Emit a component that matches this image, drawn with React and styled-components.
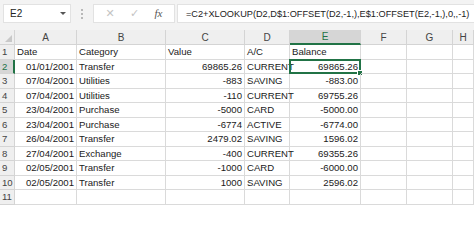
import React from 'react';
import styled, { createGlobalStyle, css } from 'styled-components';

const Global = createGlobalStyle`
  html, body { margin: 0; padding: 0; background: #ffffff; }
  body { width: 474px; height: 205px; overflow: hidden; font-family: "Liberation Sans", Arial, sans-serif; }
`;

const Page = styled.div`
  width: 474px;
  height: 205px;
  overflow: hidden;
  background: #f3f3f3;
`;

const Toolbar = styled.div`
  display: flex;
  align-items: center;
  height: 30px;
  padding: 4px 0 7px 3px;
  box-sizing: border-box;
  background: #f3f3f3;
`;

const NameBox = styled.div`
  width: 68px;
  height: 19px;
  box-sizing: border-box;
  background: #fff;
  border: 1px solid #e2e2e2;
  display: flex;
  align-items: center;
  justify-content: space-between;
  padding: 0 4px 0 6px;
  font-size: 10px;
  color: #222;
`;

const Arrow = styled.span`
  width: 0;
  height: 0;
  border-left: 3px solid transparent;
  border-right: 3px solid transparent;
  border-top: 3px solid #555;
`;

const Dots = styled.div`
  width: 22px;
  display: flex;
  flex-direction: column;
  align-items: center;
  gap: 2px;
  & > i {
    display: block;
    width: 2px;
    height: 2px;
    background: #b8b8b8;
  }
`;

const ButtonBox = styled.div`
  width: 82px;
  height: 19px;
  box-sizing: border-box;
  background: #fff;
  border: 1px solid #e2e2e2;
  display: flex;
  align-items: center;
  justify-content: space-around;
  padding: 0 4px;
  margin-right: 2px;
`;

const ToolGlyph = styled.span`
  font-size: ${p => p.$size || 11}px;
  color: ${p => p.$color || '#c4c4c4'};
  font-family: ${p => (p.$serif ? '"Liberation Serif", serif' : '"DejaVu Sans", sans-serif')};
  font-style: ${p => (p.$serif ? 'italic' : 'normal')};
  line-height: 1;
`;

const FormulaBox = styled.div`
  flex: 1;
  height: 19px;
  box-sizing: border-box;
  background: #fff;
  border: 1px solid #e2e2e2;
  border-right: none;
  display: flex;
  align-items: center;
  padding-left: 8px;
  font-size: 9.2px;
  color: #222;
  white-space: nowrap;
  overflow: hidden;
`;

const Sheet = styled.div`
  display: grid;
  grid-template-columns: 15px 62px 89px 79px 45px 71px 46px 46px 1fr;
  grid-template-rows: 15px repeat(11, 14.5px);
  background: #fff;
  font-size: 9.6px;
  color: #1a1a1a;
`;

const Corner = styled.div`
  background: #efefef;
  border-right: 1px solid #d4d4d4;
  border-bottom: 1px solid #d4d4d4;
  box-sizing: border-box;
  position: relative;
  &::after {
    content: '';
    position: absolute;
    right: 2px;
    bottom: 2px;
    width: 0;
    height: 0;
    border-left: 7px solid transparent;
    border-bottom: 7px solid #c8c8c8;
  }
`;

const ColHead = styled.div`
  background: ${p => (p.$active ? '#d6d6d6' : '#efefef')};
  color: ${p => (p.$active ? '#217346' : '#444')};
  border-right: 1px solid #d4d4d4;
  border-bottom: ${p => (p.$active ? '2px solid #217346' : '1px solid #d4d4d4')};
  box-sizing: border-box;
  display: flex;
  align-items: center;
  justify-content: center;
  font-size: 10px;
`;

const RowHead = styled.div`
  background: ${p => (p.$active ? '#d6d6d6' : '#efefef')};
  color: ${p => (p.$active ? '#217346' : '#444')};
  border-right: ${p => (p.$active ? '2px solid #217346' : '1px solid #d4d4d4')};
  border-bottom: 1px solid #d4d4d4;
  box-sizing: border-box;
  display: flex;
  align-items: center;
  padding-left: 2px;
  font-size: 9.6px;
`;

const Cell = styled.div`
  border-right: 1px solid #dadada;
  border-bottom: 1px solid #dadada;
  box-sizing: border-box;
  display: flex;
  align-items: center;
  justify-content: ${p => (p.$right ? 'flex-end' : 'flex-start')};
  padding: 0 2px;
  white-space: nowrap;
  overflow: visible;
  position: relative;
  ${p =>
    p.$selected &&
    css`
      &::before {
        content: '';
        position: absolute;
        left: -1px;
        top: -1px;
        right: -1px;
        bottom: -1px;
        border: 2px solid #217346;
        pointer-events: none;
      }
      &::after {
        content: '';
        position: absolute;
        right: -3px;
        bottom: -3px;
        width: 4px;
        height: 4px;
        background: #217346;
        border: 1px solid #fff;
      }
    `}
`;

const cols = ['A', 'B', 'C', 'D', 'E', 'F', 'G', 'H'];

const rows = [
  ['Date', 'Category', 'Value', 'A/C', 'Balance'],
  ['01/01/2001', 'Transfer', '69865.26', 'CURRENT', '69865.26'],
  ['07/04/2001', 'Utilities', '-883', 'SAVING', '-883.00'],
  ['07/04/2001', 'Utilities', '-110', 'CURRENT', '69755.26'],
  ['23/04/2001', 'Purchase', '-5000', 'CARD', '-5000.00'],
  ['23/04/2001', 'Purchase', '-6774', 'ACTIVE', '-6774.00'],
  ['26/04/2001', 'Transfer', '2479.02', 'SAVING', '1596.02'],
  ['27/04/2001', 'Exchange', '-400', 'CURRENT', '69355.26'],
  ['02/05/2001', 'Transfer', '-1000', 'CARD', '-6000.00'],
  ['02/05/2001', 'Transfer', '1000', 'SAVING', '2596.02'],
  [],
];

const rightCols = [0, 2, 4];

export default function App() {
  return (
    <Page>
      <Global />
      <Toolbar>
        <NameBox>
          <span>E2</span>
          <Arrow />
        </NameBox>
        <Dots>
          <i />
          <i />
          <i />
        </Dots>
        <ButtonBox>
          <ToolGlyph $size={11}>✕</ToolGlyph>
          <ToolGlyph $size={11}>✓</ToolGlyph>
          <ToolGlyph $serif $size={11} $color="#555">fx</ToolGlyph>
        </ButtonBox>
        <FormulaBox>=C2+XLOOKUP(D2,D$1:OFFSET(D2,-1,),E$1:OFFSET(E2,-1,),0,,-1)</FormulaBox>
      </Toolbar>
      <Sheet>
        <Corner />
        {cols.map(c => (
          <ColHead key={c} $active={c === 'E'}>
            {c}
          </ColHead>
        ))}
        {rows.map((r, ri) => (
          <React.Fragment key={ri}>
            <RowHead $active={ri === 1}>{ri + 1}</RowHead>
            {cols.map((c, ci) => {
              const v = r[ci] || '';
              const right = ri > 0 && rightCols.includes(ci);
              return (
                <Cell key={c} $right={right} $selected={ri === 1 && ci === 4}>
                  {v}
                </Cell>
              );
            })}
          </React.Fragment>
        ))}
      </Sheet>
    </Page>
  );
}
